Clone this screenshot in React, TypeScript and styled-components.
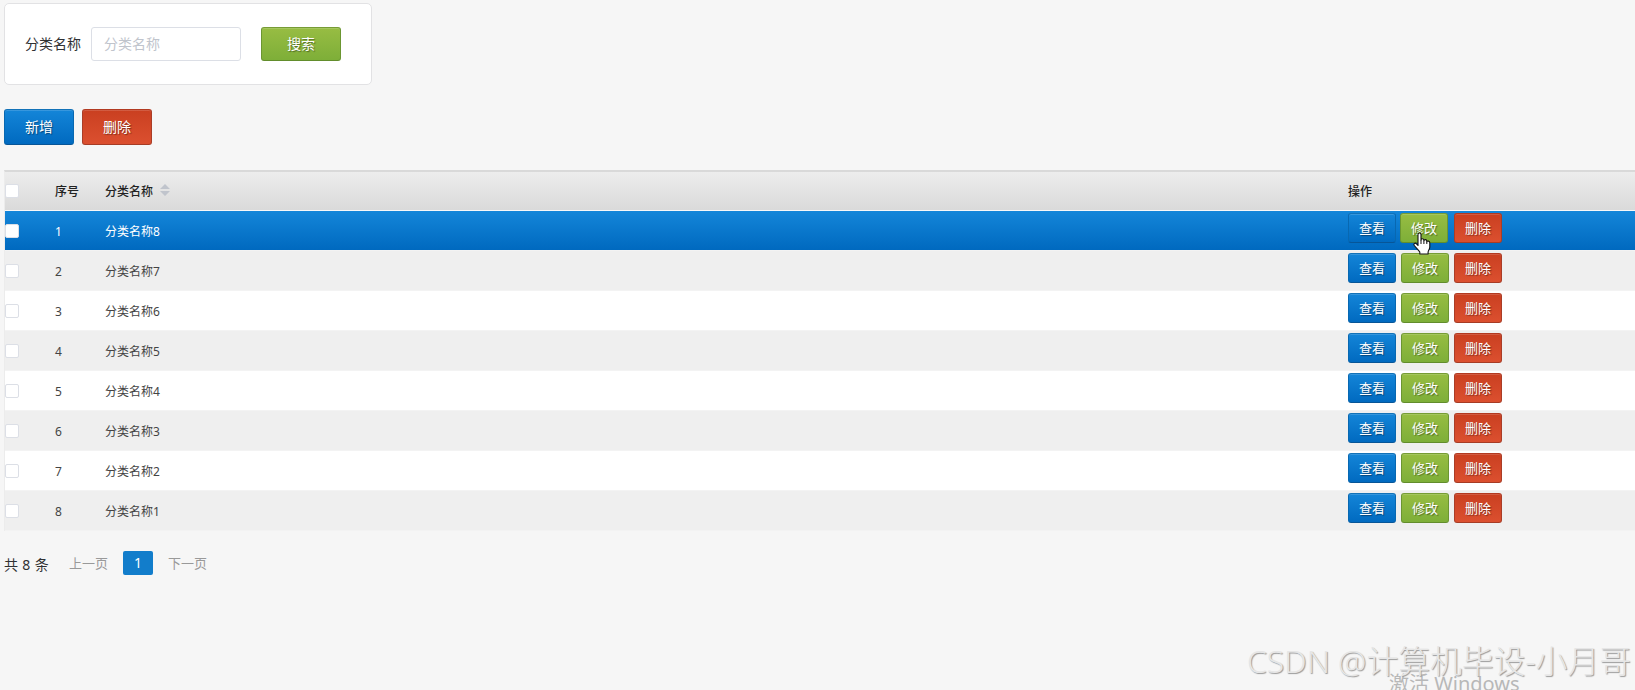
import { FC } from 'react'
import styled, { createGlobalStyle, css } from 'styled-components'

type Color = 'blue' | 'green' | 'red'

const categoryList = [8, 7, 6, 5, 4, 3, 2, 1].map((n, i) => ({
  id: i + 1,
  name: `分类名称${n}`,
}))

const App: FC = () => {
  return (
    <>
      <GlobalStyle />
      <StRoot>
        <StSearch>
          <StLabel htmlFor="name">分类名称</StLabel>
          <StInput id="name" placeholder="分类名称" />
          <StSearchButton $color="green">搜索</StSearchButton>
        </StSearch>
        <StActions>
          <StActionButton $color="blue">新增</StActionButton>
          <StActionButton $color="red">删除</StActionButton>
        </StActions>
        <StTable>
          <StHeader>
            <StCheckbox />
            <StIndex>序号</StIndex>
            <StName>
              分类名称
              <SortIcon />
            </StName>
            <StHeaderOperation>操作</StHeaderOperation>
          </StHeader>
          {categoryList.map(({ id, name }) => (
            <StRow key={id} $active={id === 1} $striped={id % 2 === 0}>
              <StCheckbox />
              <StIndex>{id}</StIndex>
              <StName>{name}</StName>
              <StOperation>
                <StRowButton $color="blue">查看</StRowButton>
                <StRowButton $color="green" $hovered={id === 1}>
                  修改
                  {id === 1 && <Pointer />}
                </StRowButton>
                <StRowButton $color="red">删除</StRowButton>
              </StOperation>
            </StRow>
          ))}
        </StTable>
        <StPagination>
          <StTotal>共 8 条</StTotal>
          <StPageLink>上一页</StPageLink>
          <StPage>1</StPage>
          <StPageLink>下一页</StPageLink>
        </StPagination>
        <StActivate>激活 Windows</StActivate>
        <StWatermark>CSDN @计算机毕设-小月哥</StWatermark>
      </StRoot>
    </>
  )
}

const SortIcon: FC = () => (
  <StSortIcon width="10" height="12" viewBox="0 0 10 12">
    <path d="M5 0L10 5H0ZM0 7H10L5 12Z" fill="#c0c4cc" />
  </StSortIcon>
)

const Pointer: FC = () => (
  <StPointer width="18" height="23" viewBox="0 0 18 23">
    <path
      d="M5 13.5V2.5C5 .4 8 .4 8 2.5V8C8 6.3 10.7 6.3 10.9 8V8.7C11.2 7.2 13.6 7.3 13.8 8.9V9.8C14.3 8.6 16.8 8.8 16.8 10.8V15C16.8 17 15.4 18.4 15.1 20V22H6.8V20C5.5 17.8 3 15.9 1.3 13.5C.1 11.5 2.3 10.4 3.5 11.8Z"
      fill="#fff"
      stroke="#111"
      strokeWidth="1.1"
      strokeLinejoin="round"
    />
    <path d="M8 8V12M10.9 8.7V12M13.8 9.8V12" stroke="#111" fill="none" />
  </StPointer>
)

const GlobalStyle = createGlobalStyle`
  * {
    box-sizing: border-box;
  }

  body {
    margin: 0;
    background-color: #f6f6f6;
    font-family: 'Noto Sans', 'Noto Sans CJK SC', sans-serif;
    color: #303133;
    overflow: hidden;
  }
`

const buttonColor = {
  blue: css`
    background: linear-gradient(#1486d9, #0069bf);
    border-color: #1272b8 #0868b1 #075597;
  `,
  green: css`
    background: linear-gradient(#98bd43, #7dae38);
    border-color: #779c35 #6b9631 #628d2c;
  `,
  red: css`
    background: linear-gradient(#c93f20, #dc5030);
    border-color: #b23a21 #aa3d27 #a63c25;
  `,
}

const StRoot = styled.div`
  position: relative;
  height: 690px;
  padding: 3px 0 0 4px;
  overflow: hidden;
`

const StSearch = styled.div`
  display: flex;
  align-items: center;
  width: 368px;
  height: 82px;
  padding: 0 20px 1px;
  background-color: #fff;
  border: 1px solid #e2e2e4;
  border-radius: 5px;
`

const StLabel = styled.label`
  width: 66px;
  font-size: 14px;
  line-height: 34px;
`

const StInput = styled.input`
  width: 150px;
  height: 34px;
  margin-right: 20px;
  padding: 0 12px;
  border: 1px solid #dcdfe6;
  border-radius: 3px;
  font-family: inherit;
  font-size: 14px;

  &::placeholder {
    color: #c0c4cc;
  }
`

const StButton = styled.button<{ $color: Color; $hovered?: boolean }>`
  position: relative;
  display: flex;
  align-items: center;
  justify-content: center;
  padding: 0 0 2px;
  border: 1px solid;
  border-radius: 3px;
  color: #fff;
  font-family: inherit;
  text-shadow: 1px 1px 1px rgba(0, 0, 0, 0.4);
  box-shadow: inset 0 1px 0 rgba(255, 255, 255, 0.15);
  ${({ $color }) => buttonColor[$color]}
  background-origin: border-box;
`

const StSearchButton = styled(StButton)`
  width: 80px;
  height: 34px;
  font-size: 14px;
`

const StActions = styled.div`
  display: flex;
  gap: 8px;
  margin: 24px 0 25px;
`

const StActionButton = styled(StButton)`
  width: 70px;
  height: 36px;
  font-size: 14px;
`

const StRowButton = styled(StButton)`
  width: 48px;
  height: 30px;
  font-size: 13px;
  ${({ $hovered }) =>
    $hovered &&
    css`
      margin: 0 1px 0 -1px;
    `}
`

const StTable = styled.div`
  border-top: 2px solid #d9d9d9;
  border-left: 1px solid #ececec;
  font-size: 12px;
`

const StHeader = styled.div`
  display: flex;
  align-items: center;
  height: 39px;
  border-bottom: 1px solid #f8f8f8;
  background: linear-gradient(#ededed, #dadada);
  color: #222;
  font-weight: 500;
`

const StRow = styled.div<{ $active: boolean; $striped: boolean }>`
  display: flex;
  align-items: center;
  height: 40px;
  border-bottom: 1px solid #f3f3f3;
  background: ${({ $striped }) => ($striped ? '#efefef' : '#fff')};
  color: #444;
  ${({ $active }) =>
    $active &&
    css`
      background: linear-gradient(#1486d9, #0069bf);
      background-clip: padding-box;
      color: #fff;
    `}
`

const StCheckbox = styled.span`
  flex: none;
  width: 14px;
  height: 14px;
  border: 1px solid #dcdfe6;
  border-radius: 2px;
  background-color: #fff;
`

const StIndex = styled.div`
  width: 50px;
  margin-left: 36px;

  ${StRow} & {
    padding-top: 1px;
  }
`

const StName = styled.div`
  display: flex;
  flex: 1;
  align-items: center;

  ${StRow} & {
    padding-top: 1px;
  }
`

const StOperation = styled.div`
  display: flex;
  gap: 5px;
  width: 287px;
  padding-bottom: 5px;
`

const StHeaderOperation = styled(StOperation)`
  padding: 0;
`

const StSortIcon = styled.svg`
  margin: -2px 0 0 7px;
`

const StPointer = styled.svg`
  position: absolute;
  top: 18px;
  left: 12px;
  z-index: 1;
`

const StPagination = styled.div`
  display: flex;
  align-items: center;
  height: 24px;
  margin-top: 20px;
`

const StTotal = styled.span`
  width: 65px;
  padding-top: 2px;
  font-size: 14px;
  word-spacing: 0.7px;
`

const StPageLink = styled.span`
  padding-bottom: 2px;
  color: #999;
  font-size: 13px;
`

const StPage = styled.span`
  width: 30px;
  height: 24px;
  margin: 0 15px;
  border-radius: 2px;
  background-color: #127dcb;
  color: #fff;
  font-size: 14px;
  line-height: 24px;
  text-align: center;
`

const StWatermark = styled.div`
  position: absolute;
  top: 637px;
  right: 4px;
  color: #e6e6e6;
  font-size: 31.8px;
  font-weight: 300;
  line-height: 48px;
  text-shadow: 1px 1px 1px #999;
  white-space: nowrap;
`

const StActivate = styled.div`
  position: absolute;
  top: 669px;
  left: 1389px;
  color: #b8b8b8;
  font-size: 20px;
  line-height: 30px;
  white-space: nowrap;
`

export default App
